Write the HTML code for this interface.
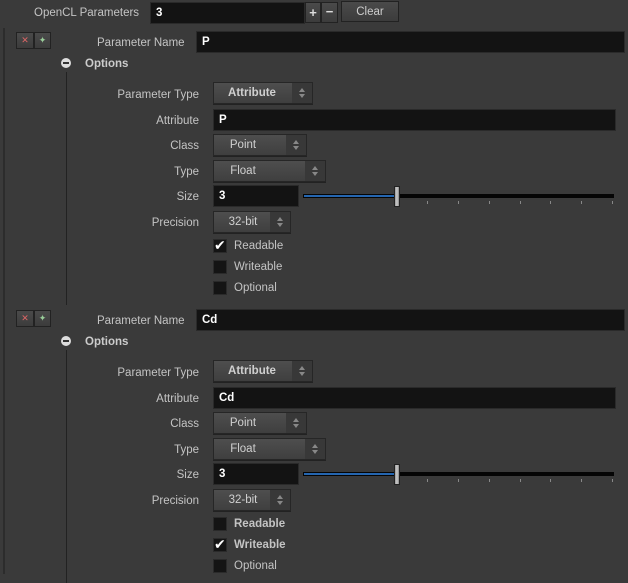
<!DOCTYPE html>
<html><head><meta charset="utf-8"><style>
*{box-sizing:border-box;margin:0;padding:0}
body{width:628px;height:574px;background:#3a3a3a;font-family:"Liberation Sans","DejaVu Sans",sans-serif;font-size:11.5px;color:#c4c4c4;position:relative;overflow:hidden}
.a{position:absolute}
.lbl{position:absolute;text-align:right;white-space:nowrap;line-height:14px;margin-top:1px}
.fld{position:absolute;background:#131313;border:1px solid #2a2a2a;color:#fff;font-weight:bold;padding-left:5px;line-height:21px}
.menu{position:absolute;background:linear-gradient(#4e4e4e,#3f3f3f);border:1px solid #262626;box-shadow:0 1px 0 #222;color:#d0d0d0;line-height:20px}
.menu .t{position:absolute;left:0;top:0;text-align:center}
.menu .arr{position:absolute;right:0;top:0;bottom:0;width:20px;background:#383838}
.menu .arr:before{content:"";position:absolute;left:7px;top:5px;border:3px solid transparent;border-bottom:4px solid #888;border-top:0}
.menu .arr:after{content:"";position:absolute;left:7px;top:11px;border:3px solid transparent;border-top:4px solid #888;border-bottom:0}
.cb{position:absolute;width:14px;height:14px;background:#141414;border:1px solid #2a2a2a}
.ck{position:absolute;color:#fff;font-size:14px;font-weight:bold;left:0;top:-3px}
.btn{position:absolute;background:linear-gradient(#4a4a4a,#3c3c3c);border:1px solid #222;color:#ddd;text-align:center}
.tk{position:absolute;top:201px;width:1px;height:3px;background:#888}
</style></head><body>
<div class="a" style="left:3px;top:28px;width:2px;height:546px;background:#2c2c2c"></div>
<div class="lbl" style="left:34px;top:5px">OpenCL Parameters</div>
<div class="fld" style="left:150px;top:2px;width:155px;height:22px">3</div>
<div class="btn" style="left:305px;top:2px;width:16px;height:21px;font-weight:bold;font-size:13px;line-height:19px">+</div>
<div class="btn" style="left:321px;top:2px;width:17px;height:21px;font-weight:bold;font-size:13px;line-height:18px">−</div>
<div class="btn" style="left:341px;top:1px;width:58px;height:21px;line-height:20px;color:#ccc">Clear</div>

<!-- BLOCK 1 -->
<div class="a" style="left:0;top:0">
<div class="btn" style="left:16px;top:32px;width:18px;height:17px;color:#d66;font-size:9px;line-height:15px">✕</div>
<div class="btn" style="left:34px;top:32px;width:17px;height:17px;color:#9c9;font-size:9px;line-height:15px">✦</div>
<div class="lbl" style="left:97px;top:35px">Parameter Name</div>
<div class="fld" style="left:196px;top:31px;width:429px;height:22px">P</div>
<div class="a" style="left:61px;top:58px;width:10px;height:10px;border-radius:50%;background:#ddd"></div>
<div class="a" style="left:63px;top:62px;width:6px;height:2px;background:#333"></div>
<div class="lbl" style="left:85px;top:56px;font-weight:bold;color:#ccc">Options</div>
<div class="a" style="left:66px;top:72px;width:1px;height:233px;background:#222"></div>
<div class="lbl" style="left:100px;top:87px;width:99px">Parameter Type</div>
<div class="menu" style="left:213px;top:82px;width:100px;height:22px;font-weight:bold"><span class="t" style="width:76px">Attribute</span><span class="arr"></span></div>
<div class="lbl" style="left:100px;top:113px;width:99px">Attribute</div>
<div class="fld" style="left:213px;top:109px;width:403px;height:22px">P</div>
<div class="lbl" style="left:100px;top:138px;width:99px">Class</div>
<div class="menu" style="left:213px;top:134px;width:94px;height:22px"><span class="t" style="width:58px">Point</span><span class="arr"></span></div>
<div class="lbl" style="left:100px;top:164px;width:99px">Type</div>
<div class="menu" style="left:213px;top:160px;width:113px;height:22px"><span class="t" style="width:58px">Float</span><span class="arr"></span></div>
<div class="lbl" style="left:100px;top:189px;width:99px">Size</div>
<div class="fld" style="left:213px;top:185px;width:86px;height:22px">3</div>
<div class="a" style="left:303px;top:194px;width:311px;height:4px;background:#050505"></div>
<div class="a" style="left:304px;top:195px;width:91px;height:2px;background:#2566b0"></div>
<div class="tk" style="left:427px"></div><div class="tk" style="left:458px"></div><div class="tk" style="left:489px"></div><div class="tk" style="left:520px"></div><div class="tk" style="left:550px"></div><div class="tk" style="left:581px"></div><div class="tk" style="left:612px"></div>
<div class="a" style="left:394px;top:186px;width:6px;height:21px;background:linear-gradient(90deg,#999,#ccc,#888);border:1px solid #222"></div>
<div class="lbl" style="left:100px;top:215px;width:99px">Precision</div>
<div class="menu" style="left:213px;top:211px;width:78px;height:22px"><span class="t" style="width:58px">32-bit</span><span class="arr"></span></div>
<div class="cb" style="left:213px;top:239px"><span class="ck">✔</span></div>
<div class="lbl" style="left:234px;top:238px">Readable</div>
<div class="cb" style="left:213px;top:260px"></div>
<div class="lbl" style="left:234px;top:259px">Writeable</div>
<div class="cb" style="left:213px;top:281px"></div>
<div class="lbl" style="left:234px;top:280px">Optional</div>
</div>

<!-- BLOCK 2 -->
<div class="a" style="left:0;top:278px">
<div class="btn" style="left:16px;top:32px;width:18px;height:17px;color:#d66;font-size:9px;line-height:15px">✕</div>
<div class="btn" style="left:34px;top:32px;width:17px;height:17px;color:#9c9;font-size:9px;line-height:15px">✦</div>
<div class="lbl" style="left:97px;top:35px">Parameter Name</div>
<div class="fld" style="left:196px;top:31px;width:429px;height:22px">Cd</div>
<div class="a" style="left:61px;top:58px;width:10px;height:10px;border-radius:50%;background:#ddd"></div>
<div class="a" style="left:63px;top:62px;width:6px;height:2px;background:#333"></div>
<div class="lbl" style="left:85px;top:56px;font-weight:bold;color:#ccc">Options</div>
<div class="a" style="left:66px;top:72px;width:1px;height:233px;background:#222"></div>
<div class="lbl" style="left:100px;top:87px;width:99px">Parameter Type</div>
<div class="menu" style="left:213px;top:82px;width:100px;height:22px;font-weight:bold"><span class="t" style="width:76px">Attribute</span><span class="arr"></span></div>
<div class="lbl" style="left:100px;top:113px;width:99px">Attribute</div>
<div class="fld" style="left:213px;top:109px;width:403px;height:22px">Cd</div>
<div class="lbl" style="left:100px;top:138px;width:99px">Class</div>
<div class="menu" style="left:213px;top:134px;width:94px;height:22px"><span class="t" style="width:58px">Point</span><span class="arr"></span></div>
<div class="lbl" style="left:100px;top:164px;width:99px">Type</div>
<div class="menu" style="left:213px;top:160px;width:113px;height:22px"><span class="t" style="width:58px">Float</span><span class="arr"></span></div>
<div class="lbl" style="left:100px;top:189px;width:99px">Size</div>
<div class="fld" style="left:213px;top:185px;width:86px;height:22px">3</div>
<div class="a" style="left:303px;top:194px;width:311px;height:4px;background:#050505"></div>
<div class="a" style="left:304px;top:195px;width:91px;height:2px;background:#2566b0"></div>
<div class="tk" style="left:427px"></div><div class="tk" style="left:458px"></div><div class="tk" style="left:489px"></div><div class="tk" style="left:520px"></div><div class="tk" style="left:550px"></div><div class="tk" style="left:581px"></div><div class="tk" style="left:612px"></div>
<div class="a" style="left:394px;top:186px;width:6px;height:21px;background:linear-gradient(90deg,#999,#ccc,#888);border:1px solid #222"></div>
<div class="lbl" style="left:100px;top:215px;width:99px">Precision</div>
<div class="menu" style="left:213px;top:211px;width:78px;height:22px"><span class="t" style="width:58px">32-bit</span><span class="arr"></span></div>
<div class="cb" style="left:213px;top:239px"></div>
<div class="lbl" style="left:234px;top:238px;font-weight:bold">Readable</div>
<div class="cb" style="left:213px;top:260px"><span class="ck">✔</span></div>
<div class="lbl" style="left:234px;top:259px;font-weight:bold">Writeable</div>
<div class="cb" style="left:213px;top:281px"></div>
<div class="lbl" style="left:234px;top:280px">Optional</div>
</div>
</body></html>
